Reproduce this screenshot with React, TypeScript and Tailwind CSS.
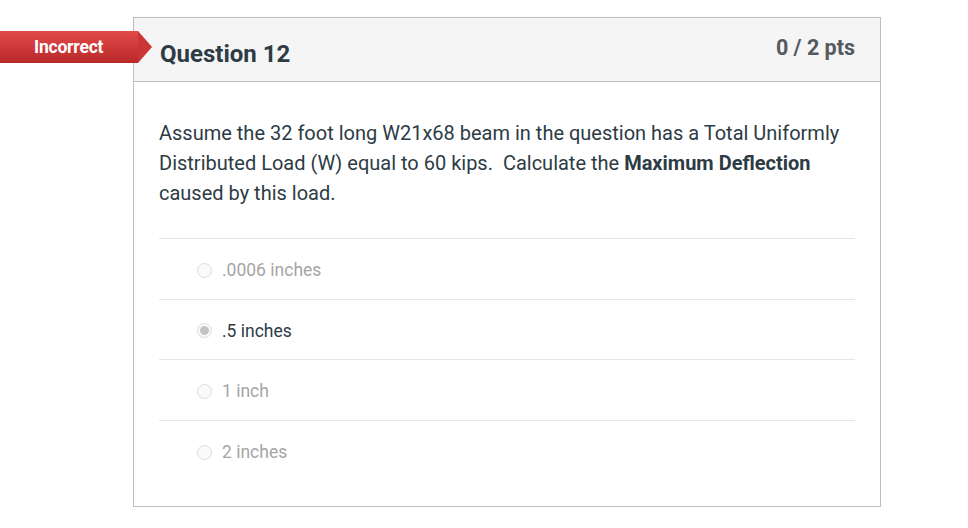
import React from 'react';

const answers = [
  { label: '.0006 inches', selected: false },
  { label: '.5 inches', selected: true },
  { label: '1 inch', selected: false },
  { label: '2 inches', selected: false },
];

const Radio = ({ checked }: { checked: boolean }) => (
  <span className="flex h-[15px] w-[15px] shrink-0 items-center justify-center rounded-full border border-[#dcdcdc] bg-[#fafafa]">
    {checked && <span className="h-[9px] w-[9px] rounded-full bg-[#c4c4c4]" />}
  </span>
);

export default function App() {
  return (
    <div className="relative h-[528px] w-[968px] bg-white font-['Roboto',sans-serif]">
      {/* Incorrect badge */}
      <div className="absolute left-0 top-[31px] flex h-[32px] items-center">
        <div className="flex h-full w-[138px] items-center bg-gradient-to-b from-[#e34a4a] to-[#b92828] pl-[34px] text-[17.5px] font-bold tracking-[-0.2px] text-white">
          Incorrect
        </div>
        <div className="h-0 w-0 border-y-[16px] border-l-[14px] border-y-transparent border-l-[#cc3535]" />
      </div>

      <div className="pl-[133px] pt-[17px]">
        <div className="w-[748px] border border-[#bdbdbd]">
          {/* Header */}
          <div className="flex h-[64px] items-center justify-between border-b border-[#bdbdbd] bg-[#f5f5f5] pl-[26px] pr-[25px]">
            <h2 className="mt-[9px] text-[24px] font-bold text-[#2d3b45]">Question 12</h2>
            <span className="-mt-[3px] text-[21.5px] font-bold text-[#555a5e]">0 / 2 pts</span>
          </div>

          {/* Body */}
          <div className="px-[25px] pt-[36px] pb-[25px]">
            <p className="text-[20px] leading-[30px] text-[#2d3b45]">
              Assume the 32 foot long W21x68 beam in the question has a Total Uniformly
              Distributed Load (W) equal to 60 kips.&nbsp; Calculate the{' '}
              <strong className="font-bold">Maximum Deflection</strong> caused by this load.
            </p>

            <div className="mt-[30px] border-t border-[#e6e6e6]">
              {answers.map((a, i) => (
                <div
                  key={a.label}
                  className={`flex h-[60.5px] items-center gap-[10px] pl-[38px] pt-[3px] ${i < answers.length - 1 ? 'border-b border-[#e6e6e6]' : ''}`}
                >
                  <Radio checked={a.selected} />
                  <span className={`text-[17.5px] ${a.selected ? 'text-[#2d3b45]' : 'text-[#a5a5a5]'}`}>
                    {a.label}
                  </span>
                </div>
              ))}
            </div>
          </div>
        </div>
      </div>
    </div>
  );
}
